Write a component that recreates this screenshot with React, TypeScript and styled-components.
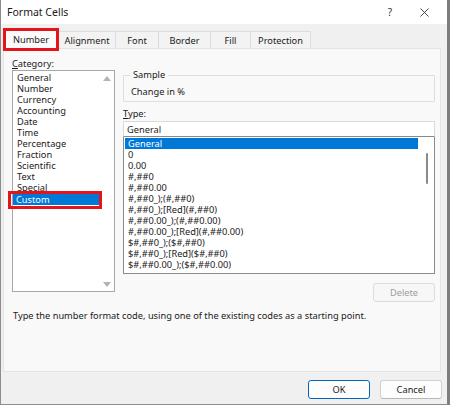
import React from "react";
import styled, { createGlobalStyle, css } from "styled-components";

const GlobalStyle = createGlobalStyle`
  html, body {
    margin: 0;
    padding: 0;
    background: #ffffff;
  }
  * {
    box-sizing: border-box;
  }
`;

const FONT = `"Noto Sans", "Open Sans", "Liberation Sans", sans-serif`;

const Dialog = styled.div`
  width: 450px;
  height: 405px;
  background: #f0f0f0;
  border-left: 1px solid #8c8c8c;
  border-right: 3px solid #7d7d7d;
  border-bottom: 1px solid #8c8c8c;
  font-family: ${FONT};
  font-size: 9.25px;
  color: #1a1a1a;
  display: flex;
  flex-direction: column;
  overflow: hidden;
`;

const TitleBar = styled.div`
  height: 24px;
  flex: none;
  background: #ffffff;
  display: flex;
  align-items: center;
  padding-left: 6px;
  padding-right: 11px;
`;

const Title = styled.div`
  flex: 1;
  font-size: 10.5px;
  color: #1a1a1a;
`;

const TitleButton = styled.div<{ width: number }>`
  width: ${(p) => p.width}px;
  display: flex;
  justify-content: center;
  align-items: center;
  font-size: 10px;
  color: #333;
`;

const TabRow = styled.div`
  height: 24px;
  flex: none;
  display: flex;
  align-items: flex-end;
  padding-left: 2px;
`;

const Tab = styled.div<{ active?: boolean; width: number }>`
  width: ${(p) => p.width}px;
  height: 17px;
  display: flex;
  align-items: center;
  justify-content: center;
  background: #f3f3f3;
  border: 1px solid #dcdcdc;
  border-bottom: none;
  margin-left: -1px;
  font-size: 9.25px;
  color: #1a1a1a;

  ${(p) =>
    p.active &&
    css`
      height: 23px;
      margin-left: 0;
      background: #fbfbfb;
      border: 3px solid #e5141b;
      border-bottom: 3px solid #e5141b;
      position: relative;
      z-index: 1;
      margin-bottom: -3px;
    `}
`;

const Panel = styled.div`
  height: 324px;
  flex: none;
  margin-left: 2px;
  margin-right: 6px;
  background: #f9f9f9;
  border: 1px solid #e3e3e3;
  padding: 8px 5px 0 8px;
  display: flex;
  flex-direction: column;
`;

const Columns = styled.div`
  display: flex;
  gap: 8px;
`;

const LeftColumn = styled.div`
  width: 103px;
  flex: none;
  display: flex;
  flex-direction: column;
`;

const RightColumn = styled.div`
  width: 312px;
  flex: none;
  display: flex;
  flex-direction: column;
`;

const FieldLabel = styled.div`
  height: 13px;
  line-height: 13px;
  font-size: 9.25px;
  color: #1a1a1a;

  u {
    text-decoration: underline;
    text-underline-offset: 1px;
  }
`;

const CategoryBox = styled.div`
  height: 222px;
  background: #ffffff;
  border: 1px solid #a8a8a8;
  display: flex;
`;

const ItemList = styled.div<{ clip?: boolean }>`
  flex: 1;
  padding: 1px;
  overflow: ${(p) => (p.clip ? "hidden" : "visible")};
`;

const Item = styled.div<{ selected?: boolean }>`
  height: 11px;
  line-height: 11px;
  padding-left: 3px;
  font-size: 9.25px;
  white-space: nowrap;
  color: #1a1a1a;

  ${(p) =>
    p.selected &&
    css`
      background: #0078d7;
      color: #ffffff;
    `}
`;

const CustomMark = styled.div`
  position: relative;
  margin: -2px -3px 0 -6px;
  border: 3px solid #e5141b;
  padding: 0 0 1px 2px;
`;

const ArrowBar = styled.div`
  width: 14px;
  flex: none;
  display: flex;
  flex-direction: column;
  justify-content: space-between;
  align-items: center;
  padding: 5px 0 4px;
`;

const Arrow = styled.div<{ down?: boolean }>`
  width: 0;
  height: 0;
  border-left: 4px solid transparent;
  border-right: 4px solid transparent;
  ${(p) =>
    p.down
      ? css`
          border-top: 5px solid #b4b4b4;
        `
      : css`
          border-bottom: 5px solid #b4b4b4;
        `}
`;

const SampleGroup = styled.fieldset`
  margin: 13px 0 0 0;
  height: 32px;
  padding: 0 0 0 7px;
  border: 1px solid #dedede;
  border-radius: 1px;
`;

const Legend = styled.legend`
  padding: 0 3px;
  margin-left: -1px;
  font-size: 9.25px;
  color: #1a1a1a;
  line-height: 10px;
`;

const SampleText = styled.div`
  font-size: 9.25px;
  line-height: 12px;
  padding-top: 6px;
`;

const TypeLabel = styled(FieldLabel)`
  margin-top: 5px;
  margin-bottom: 1px;
`;

const TypeInput = styled.div`
  height: 16px;
  flex: none;
  background: #ffffff;
  border: 1px solid #dadada;
  border-bottom: 1px solid #8a8a8a;
  padding-left: 3px;
  display: flex;
  align-items: center;
  font-size: 9.25px;
`;

const TypeList = styled.div`
  height: 137px;
  flex: none;
  background: #ffffff;
  border: 1px solid #8a8a8a;
  border-top: none;
  display: flex;
`;

const ScrollTrack = styled.div`
  width: 15px;
  flex: none;
  display: flex;
  justify-content: center;
  padding-top: 16px;
`;

const ScrollThumb = styled.div`
  width: 2px;
  height: 31px;
  border-radius: 1px;
  background: #8a8a8a;
`;

const ButtonRow = styled.div<{ pad: number }>`
  display: flex;
  justify-content: flex-end;
  gap: 10px;
  padding-right: ${(p) => p.pad}px;
`;

const Button = styled.div<{ variant?: "default" | "disabled" }>`
  width: 62px;
  height: 19px;
  display: flex;
  align-items: center;
  justify-content: center;
  border-radius: 3px;
  background: #fdfdfd;
  border: 1px solid #d0d0d0;
  border-bottom-color: #b8b8b8;
  font-size: 9.25px;
  color: #1a1a1a;

  ${(p) =>
    p.variant === "default" &&
    css`
      border: 1px solid #0067c0;
    `}
  ${(p) =>
    p.variant === "disabled" &&
    css`
      background: #f7f7f7;
      border: 1px solid #dcdcdc;
      color: #9d9d9d;
    `}
`;

const DeleteRow = styled(ButtonRow)`
  margin-top: 9px;
`;

const Hint = styled.div`
  margin-top: 7px;
  padding-left: 1px;
  font-size: 9.25px;
  color: #1a1a1a;
`;

const Footer = styled.div`
  flex: 1;
  display: flex;
  align-items: center;
  justify-content: flex-end;
  padding-top: 2px;
`;

const categories = [
  "General",
  "Number",
  "Currency",
  "Accounting",
  "Date",
  "Time",
  "Percentage",
  "Fraction",
  "Scientific",
  "Text",
  "Special",
  "Custom",
];

const formats = [
  "General",
  "0",
  "0.00",
  "#,##0",
  "#,##0.00",
  "#,##0_);(#,##0)",
  "#,##0_);[Red](#,##0)",
  "#,##0.00_);(#,##0.00)",
  "#,##0.00_);[Red](#,##0.00)",
  "$#,##0_);($#,##0)",
  "$#,##0_);[Red]($#,##0)",
  "$#,##0.00_);($#,##0.00)",
];

const CloseIcon = () => (
  <svg width="9" height="9" viewBox="0 0 9 9">
    <path d="M0.5 0.5 L8.5 8.5 M8.5 0.5 L0.5 8.5" stroke="#333" strokeWidth="0.9" />
  </svg>
);

export default function App() {
  return (
    <>
      <GlobalStyle />
      <Dialog>
        <TitleBar>
          <Title>Format Cells</Title>
          <TitleButton width={16}>?</TitleButton>
          <TitleButton width={24} style={{ marginLeft: 14 }}>
            <CloseIcon />
          </TitleButton>
        </TitleBar>

        <TabRow>
          <Tab active width={56}>
            Number
          </Tab>
          <Tab width={58}>Alignment</Tab>
          <Tab width={44}>Font</Tab>
          <Tab width={53}>Border</Tab>
          <Tab width={41}>Fill</Tab>
          <Tab width={61}>Protection</Tab>
        </TabRow>

        <Panel>
          <Columns>
            <LeftColumn>
              <FieldLabel>
                <u>C</u>ategory:
              </FieldLabel>
              <CategoryBox>
                <ItemList>
                  {categories.map((c) =>
                    c === "Custom" ? (
                      <CustomMark key={c}>
                        <Item selected>{c}</Item>
                      </CustomMark>
                    ) : (
                      <Item key={c}>{c}</Item>
                    )
                  )}
                </ItemList>
                <ArrowBar>
                  <Arrow />
                  <Arrow down />
                </ArrowBar>
              </CategoryBox>
            </LeftColumn>

            <RightColumn>
              <SampleGroup>
                <Legend>Sample</Legend>
                <SampleText>Change in %</SampleText>
              </SampleGroup>
              <TypeLabel>
                <u>T</u>ype:
              </TypeLabel>
              <TypeInput>General</TypeInput>
              <TypeList>
                <ItemList clip>
                  {formats.map((f, i) => (
                    <Item key={f} selected={i === 0}>
                      {f}
                    </Item>
                  ))}
                </ItemList>
                <ScrollTrack>
                  <ScrollThumb />
                </ScrollTrack>
              </TypeList>
              <DeleteRow pad={0}>
                <Button variant="disabled">Delete</Button>
              </DeleteRow>
            </RightColumn>
          </Columns>
          <Hint>
            Type the number format code, using one of the existing codes as a
            starting point.
          </Hint>
        </Panel>

        <Footer>
          <ButtonRow pad={5}>
            <Button variant="default">OK</Button>
            <Button>Cancel</Button>
          </ButtonRow>
        </Footer>
      </Dialog>
    </>
  );
}
